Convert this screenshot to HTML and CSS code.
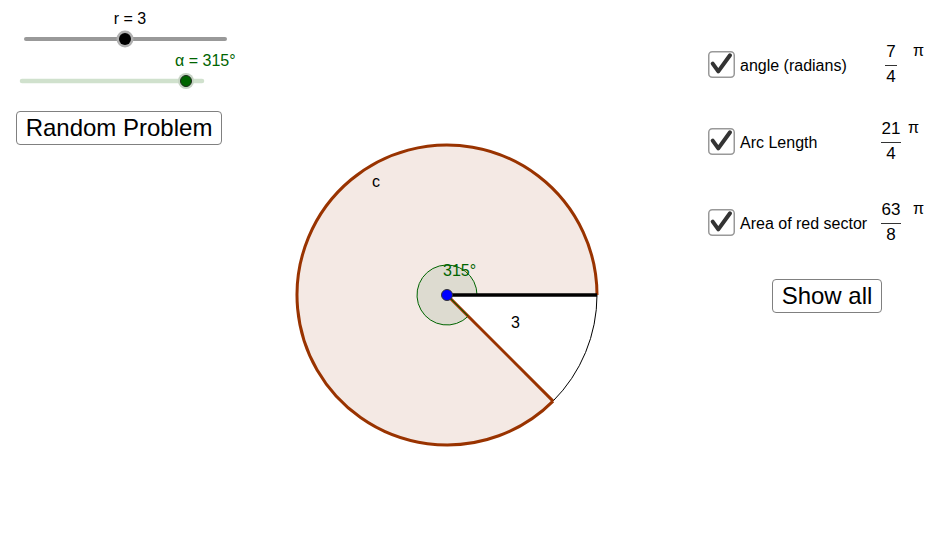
FILE: index.html
```html
<!DOCTYPE html>
<html>
<head>
<meta charset="utf-8">
<link rel="stylesheet" href="styles.css">
</head>
<body>
<div class="applet">
  <svg class="canvas" width="939" height="551" viewBox="0 0 939 551">
    <path class="sector" d="M447,295 L597,295 A150,150 0 1,0 553.07,401.07 Z"/>
    <circle class="circle-c" cx="447" cy="295" r="150"/>
    <path class="sector-edge" d="M597,295 A150,150 0 1,0 553.07,401.07"/>
    <path class="angle" d="M447,295 L477,295 A30,30 0 1,0 468.21,316.21 Z"/>
    <line class="radius-b" x1="447" y1="295" x2="553.07" y2="401.07"/>
    <line class="radius-g" x1="447" y1="295" x2="468.21" y2="316.21"/>
    <line class="radius-k" x1="447" y1="295" x2="597" y2="295"/>
    <circle class="center" cx="447" cy="295" r="5.5"/>
    <text class="lbl" x="372" y="187">c</text>
    <text class="lbl green" x="443" y="276">315°</text>
    <text class="lbl" x="511" y="328">3</text>
  </svg>

  <div class="left">
    <svg class="sliders" width="240" height="100" viewBox="0 0 240 100">
      <text class="lbl" x="130" y="24" text-anchor="middle">r = 3</text>
      <line class="track-r" x1="26" y1="39" x2="225" y2="39"/>
      <circle class="halo-r" cx="125" cy="39" r="8.5"/>
      <circle class="knob-r" cx="125" cy="39" r="6"/>
      <text class="lbl green" x="175" y="66">α = 315°</text>
      <line class="track-a" x1="22" y1="81" x2="202" y2="81"/>
      <circle class="halo-a" cx="186" cy="81" r="8"/>
      <circle class="knob-a" cx="186" cy="81" r="5.5"/>
    </svg>
    <button class="btn btn-random">Random Problem</button>
  </div>

  <div class="right">
    <div class="row row1">
      <svg class="cb" width="27" height="27" viewBox="0 0 27 27"><rect x="0.75" y="0.75" width="25.5" height="25.5" rx="3.5"/><path d="M4.7,12.6 L10.3,20.4 L22,4.3"/></svg>
      <span class="label">angle (radians)</span>
      <span class="frac"><span class="num">7</span><span class="den">4</span></span>
      <span class="pi">π</span>
    </div>
    <div class="row row2">
      <svg class="cb" width="27" height="27" viewBox="0 0 27 27"><rect x="0.75" y="0.75" width="25.5" height="25.5" rx="3.5"/><path d="M4.7,12.6 L10.3,20.4 L22,4.3"/></svg>
      <span class="label">Arc Length</span>
      <span class="frac"><span class="num">21</span><span class="den">4</span></span>
      <span class="pi pi-near">π</span>
    </div>
    <div class="row row3">
      <svg class="cb" width="27" height="27" viewBox="0 0 27 27"><rect x="0.75" y="0.75" width="25.5" height="25.5" rx="3.5"/><path d="M4.7,12.6 L10.3,20.4 L22,4.3"/></svg>
      <span class="label">Area of red sector</span>
      <span class="frac"><span class="num">63</span><span class="den">8</span></span>
      <span class="pi">π</span>
    </div>
    <button class="btn btn-show">Show all</button>
  </div>
</div>
</body>
</html>
```

FILE: styles.css
```css
html, body {
  margin: 0;
  padding: 0;
  background: #ffffff;
}

body {
  font-family: "Liberation Sans", Arial, sans-serif;
  color: #000;
}

.applet {
  position: relative;
  width: 939px;
  height: 551px;
  overflow: hidden;
  display: flex;
  justify-content: space-between;
}

.canvas {
  position: absolute;
  left: 0;
  top: 0;
  z-index: 0;
}

.sector {
  fill: #f4e9e4;
  stroke: none;
}

.circle-c {
  fill: none;
  stroke: #000;
  stroke-width: 1;
}

.sector-edge {
  fill: none;
  stroke: #993300;
  stroke-width: 3;
}

.angle {
  fill: #dddbd0;
  stroke: #006400;
  stroke-width: 1;
}

.radius-b {
  stroke: #993300;
  stroke-width: 3;
}

.radius-g {
  stroke: #006400;
  stroke-width: 1;
}

.radius-k {
  stroke: #000;
  stroke-width: 3.5;
}

.center {
  fill: #0000ff;
  stroke: #333;
  stroke-width: 1;
}

.lbl {
  font-family: "Liberation Sans", Arial, sans-serif;
  font-size: 16px;
  fill: #000;
}

.lbl.green {
  fill: #006400;
}

.left, .right {
  position: relative;
  z-index: 1;
  display: flex;
  flex-direction: column;
}

.left {
  width: 240px;
}

.sliders {
  display: block;
}

.track-r {
  stroke: #999;
  stroke-width: 4;
  stroke-linecap: round;
}

.halo-r {
  fill: #b0b0b0;
}

.knob-r {
  fill: #000;
}

.track-a {
  stroke: #d0e1cd;
  stroke-width: 4.5;
  stroke-linecap: round;
}

.halo-a {
  fill: #c6d3c4;
}

.knob-a {
  fill: #006400;
  stroke: #1a2a1a;
  stroke-width: 1;
}

.btn {
  box-sizing: border-box;
  font-family: "Liberation Sans", Arial, sans-serif;
  font-size: 24px;
  line-height: 1;
  color: #000;
  background: #fff;
  border: 1.5px solid #808080;
  border-radius: 4px;
  padding: 0;
  height: 34px;
}

.btn-random {
  width: 206px;
  margin-top: 11px;
  margin-left: 16px;
}

.right {
  width: 231px;
  padding-top: 43px;
}

.row {
  display: flex;
  align-items: center;
  height: 43px;
}

.row2 {
  margin-top: 34px;
}

.row3 {
  margin-top: 38px;
}

.cb {
  flex: none;
  display: block;
}

.cb rect {
  fill: #fff;
  stroke: #999;
  stroke-width: 1.5;
}

.cb path {
  fill: none;
  stroke: #333;
  stroke-width: 4;
  stroke-linecap: round;
  stroke-linejoin: round;
}

.label {
  font-size: 16px;
  margin-left: 5px;
  width: 140px;
  flex: none;
  margin-top: 3px;
  white-space: nowrap;
}

.frac {
  display: flex;
  flex-direction: column;
  align-items: center;
  width: 22px;
  font-size: 17px;
  line-height: 18px;
}

.num {
  padding: 0 1px 4px;
  border-bottom: 1px solid #333;
}

.den {
  padding-top: 2px;
}

.pi {
  align-self: flex-start;
  font-size: 16px;
  line-height: 18px;
  margin-top: -1px;
  margin-left: 11px;
}

.pi-near {
  margin-left: 6px;
}

.btn-show {
  width: 110px;
  margin-top: 35px;
  margin-left: 64px;
}
```
